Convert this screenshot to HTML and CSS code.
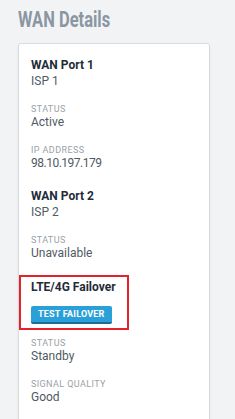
FILE: index.html
```html
<!DOCTYPE html>
<html>

<head>
    <meta charset="utf-8">
    <title>WAN Details</title>
    <link rel="stylesheet" href="styles.css">
</head>

<body>
    <div class="page">
        <h2 class="pageTitle"><span>WAN Details</span></h2>

        <div class="card">
            <div class="port">
                <p class="portName">WAN Port 1</p>
                <p class="value isp">ISP 1</p>
                <div class="field">
                    <p class="label">Status</p>
                    <p class="value">Active</p>
                </div>
                <div class="field">
                    <p class="label">IP Address</p>
                    <p class="value ip">98.10.197.179</p>
                </div>
            </div>

            <div class="port">
                <p class="portName">WAN Port 2</p>
                <p class="value isp">ISP 2</p>
                <div class="field">
                    <p class="label">Status</p>
                    <p class="value">Unavailable</p>
                </div>
            </div>

            <div class="port">
                <div class="highlight">
                    <p class="portName">LTE/4G Failover</p>
                    <button class="testBtn">TEST FAILOVER</button>
                </div>
                <div class="field first">
                    <p class="label">Status</p>
                    <p class="value">Standby</p>
                </div>
                <div class="field">
                    <p class="label">Signal Quality</p>
                    <p class="value">Good</p>
                </div>
            </div>
        </div>
    </div>
</body>

</html>
```

FILE: styles.css
```css
body {
    margin: 0;
    padding: 0;
    background-color: #f2f3f5;
    font-family: Roboto, "Liberation Sans", sans-serif;
}

.page {
    padding: 7px 25px 0 18px;
}

.pageTitle {
    margin: 0;
    height: 26px;
    line-height: 26px;
    font-size: 22px;
    font-weight: 700;
    color: #8a97a2;
}

.pageTitle span {
    display: inline-block;
    transform: scaleX(0.75);
    transform-origin: left center;
}

.card {
    margin-top: 10px;
    background-color: #fff;
    border: 1px solid #d9dcdf;
    border-radius: 3px;
    box-shadow: 0 1px 2px rgba(0, 0, 0, 0.08);
    padding: 13px 12px 30px 12px;
}

.card p {
    margin: 0;
}

.port + .port {
    margin-top: 17px;
}

.portName {
    font-size: 12px;
    line-height: 16px;
    font-weight: 700;
    color: #1f2c38;
}

.value {
    font-size: 12px;
    line-height: 16px;
    color: #4f5a63;
}

.value.ip {
    letter-spacing: -0.5px;
}

.isp {
    margin-top: 2px;
}

.field {
    margin-top: 15px;
}

.field.first {
    margin-top: 8px;
}

.label {
    font-size: 9px;
    line-height: 10px;
    text-transform: uppercase;
    letter-spacing: 0.4px;
    color: #9aa1a8;
}

.highlight {
    box-sizing: border-box;
    width: 110px;
    margin-left: -12px;
    padding: 2px 0 4px 10px;
    border: 2px solid #e3222b;
}

.port + .port .highlight {
    margin-top: -3px;
}

.testBtn {
    display: block;
    margin-top: 11px;
    padding: 0 7px;
    height: 18px;
    line-height: 16px;
    border: 0;
    border-bottom: 2px solid #1b6c96;
    border-radius: 2px;
    background-color: #2a9fd8;
    color: #fff;
    font-family: Roboto, "Liberation Sans", sans-serif;
    font-size: 9px;
    font-weight: 700;
    letter-spacing: 0.2px;
}
```
